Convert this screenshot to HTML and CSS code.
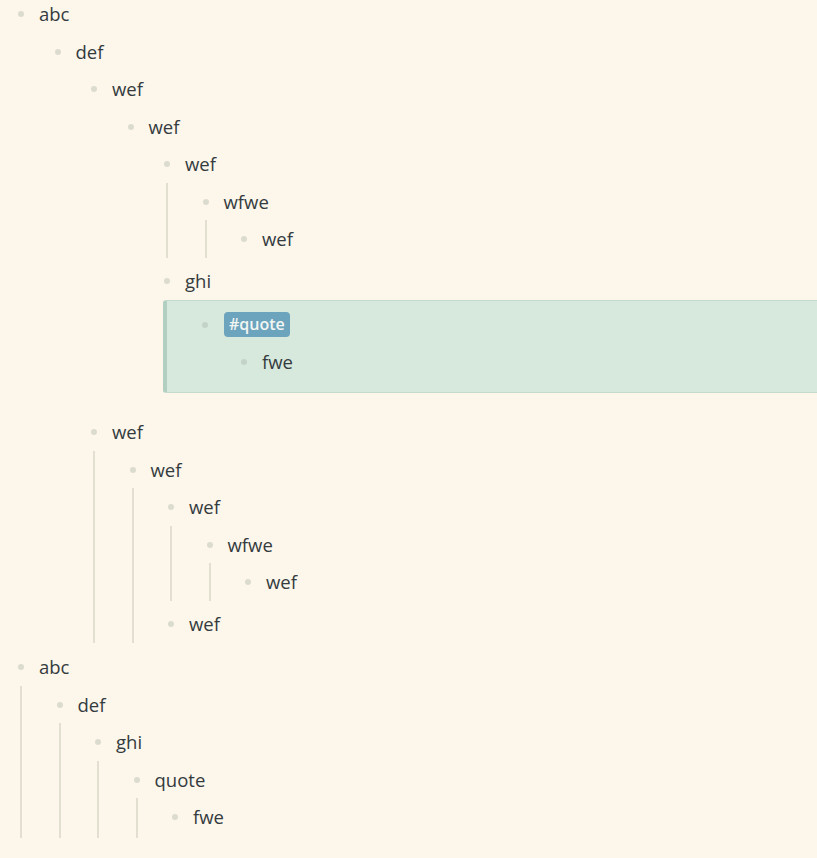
FILE: index.html
```html
<!DOCTYPE html>
<html>
<head>
<meta charset="utf-8">
<link rel="stylesheet" href="styles.css">
</head>
<body>
<div class="page">

  <div class="block">
    <div class="row"><span class="bullet"><i></i></span><span class="text">abc</span></div>
    <div class="children plain">
      <div class="block">
        <div class="row"><span class="bullet"><i></i></span><span class="text">def</span></div>
        <div class="children plain">
          <div class="block">
            <div class="row"><span class="bullet"><i></i></span><span class="text">wef</span></div>
            <div class="children plain">
              <div class="block">
                <div class="row"><span class="bullet"><i></i></span><span class="text">wef</span></div>
                <div class="children plain">
                  <div class="block">
                    <div class="row"><span class="bullet"><i></i></span><span class="text">wef</span></div>
                    <div class="children guide">
                      <div class="block">
                        <div class="row"><span class="bullet"><i></i></span><span class="text">wfwe</span></div>
                        <div class="children guide">
                          <div class="block">
                            <div class="row"><span class="bullet"><i></i></span><span class="text">wef</span></div>
                          </div>
                        </div>
                      </div>
                    </div>
                  </div>
                  <div class="block">
                    <div class="row"><span class="bullet"><i></i></span><span class="text">ghi</span></div>
                    <div class="children quote">
                      <div class="block">
                        <div class="row tag-row"><span class="bullet"><i></i></span><span class="tag">#quote</span></div>
                        <div class="children quote-inner">
                          <div class="block">
                            <div class="row"><span class="bullet"><i></i></span><span class="text">fwe</span></div>
                          </div>
                        </div>
                      </div>
                    </div>
                  </div>
                </div>
              </div>
            </div>
          </div>
          <div class="block">
            <div class="row"><span class="bullet"><i></i></span><span class="text">wef</span></div>
            <div class="children guide">
              <div class="block">
                <div class="row"><span class="bullet"><i></i></span><span class="text">wef</span></div>
                <div class="children guide">
                  <div class="block">
                    <div class="row"><span class="bullet"><i></i></span><span class="text">wef</span></div>
                    <div class="children guide">
                      <div class="block">
                        <div class="row"><span class="bullet"><i></i></span><span class="text">wfwe</span></div>
                        <div class="children guide">
                          <div class="block">
                            <div class="row"><span class="bullet"><i></i></span><span class="text">wef</span></div>
                          </div>
                        </div>
                      </div>
                    </div>
                  </div>
                  <div class="block">
                    <div class="row"><span class="bullet"><i></i></span><span class="text">wef</span></div>
                  </div>
                </div>
              </div>
            </div>
          </div>
        </div>
      </div>
    </div>
  </div>

  <div class="block last-tree">
    <div class="row"><span class="bullet"><i></i></span><span class="text">abc</span></div>
    <div class="children guide">
      <div class="block">
        <div class="row"><span class="bullet"><i></i></span><span class="text">def</span></div>
        <div class="children guide">
          <div class="block">
            <div class="row"><span class="bullet"><i></i></span><span class="text">ghi</span></div>
            <div class="children guide">
              <div class="block">
                <div class="row"><span class="bullet"><i></i></span><span class="text">quote</span></div>
                <div class="children guide tail">
                  <div class="block">
                    <div class="row"><span class="bullet"><i></i></span><span class="text">fwe</span></div>
                  </div>
                </div>
              </div>
            </div>
          </div>
        </div>
      </div>
    </div>
  </div>

</div>
</body>
</html>
```

FILE: styles.css
```css
html, body {
  margin: 0;
  padding: 0;
  background: #fcf6eb;
  overflow: hidden;
}

body {
  font-family: "Open Sans", "Noto Sans", sans-serif;
  font-size: 18.5px;
  color: #343b3e;
}

.page {
  margin-top: -4.75px;
  padding-left: 9px;
}

.block {
  display: block;
}

.last-tree {
  padding-top: 1px;
}

.children.guide.tail {
  padding-bottom: 2px;
}

.row {
  display: flex;
  align-items: center;
  height: 37.5px;
}

.bullet {
  width: 24px;
  margin-right: 6px;
  display: flex;
  justify-content: center;
  align-items: center;
  flex: none;
}

.bullet i {
  display: block;
  width: 6px;
  height: 6px;
  border-radius: 50%;
  background: #dcdbcf;
}

.text {
  line-height: 24px;
  white-space: nowrap;
}

.children {
  display: block;
}

.children.plain {
  padding-left: 36.5px;
}

.children.guide {
  margin-left: 11px;
  border-left: 2px solid #e2dfd1;
  padding-left: 25.5px;
  margin-bottom: 4.5px;
}

.children.quote {
  margin-left: 8px;
  margin-right: -120px;
  margin-bottom: 20px;
  background: #d7e8dd;
  border: 1px solid #c6dbce;
  border-left: 4px solid #b3cfc1;
  border-radius: 3px;
  padding: 6px 0 12px 26px;
}

.children.quote-inner {
  padding-left: 39px;
}

.quote .bullet i {
  background: #c3d3c8;
}

.tag-row {
  height: 36px;
}

.tag-row .bullet {
  margin-right: 7px;
}

.tag {
  display: inline-block;
  background: #6ca3bd;
  color: #f2f6f2;
  font-size: 16px;
  font-weight: 600;
  line-height: 25px;
  padding: 0 5px;
  border-radius: 4px;
  white-space: nowrap;
}
```
